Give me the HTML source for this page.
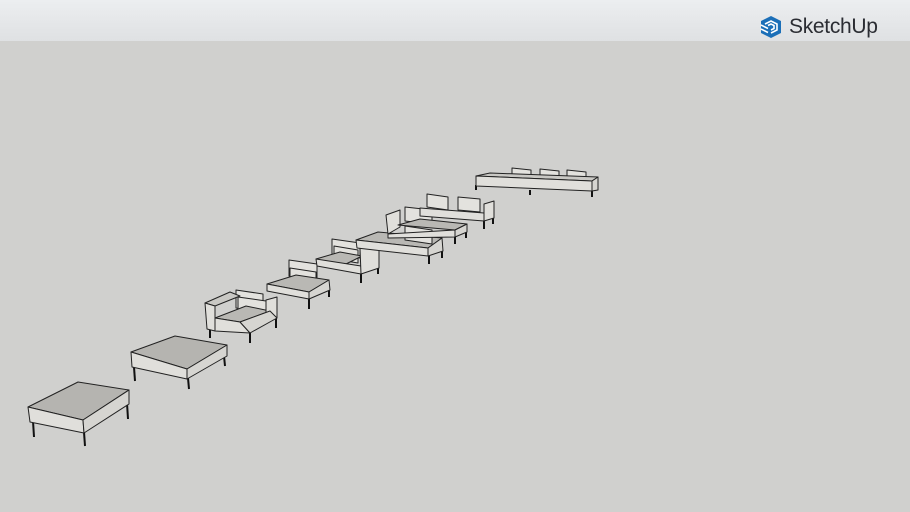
<!DOCTYPE html>
<html><head><meta charset="utf-8"><style>
html,body{margin:0;padding:0;width:910px;height:512px;overflow:hidden;background:#d0d0ce;font-family:"Liberation Sans",sans-serif}
.sky{position:absolute;left:0;top:0;width:910px;height:41px;background:linear-gradient(#eceef0,#dfe1e3)}
.logo{position:absolute;left:760px;top:15px;display:flex;align-items:center}
.logo span{font-size:21px;color:#2b2d33;margin-left:7px;letter-spacing:-0.3px}
svg.s{position:absolute;left:0;top:0}
</style></head><body>
<div class="sky"></div>
<div class="logo">
<svg width="22" height="24" viewBox="0 0 22 24"><path d="M11 1 L21 6 V18 L11 23 L1 18 V6 Z" fill="#1b6fb8"/><path d="M5 9 L11 6 L17 9 V15 L11 18 M8 10.5 L11 9 L14 10.5 V13.5 L11 15 M1 10 L8 13.5 M1 14 L8 17.5" stroke="#fff" stroke-width="1.6" fill="none"/></svg>
<span>SketchUp</span></div>
<svg class="s" width="910" height="512" viewBox="0 0 910 512" stroke="#222" stroke-width="1" stroke-linejoin="round">
<g stroke-width="2" stroke="#111">
<line x1="33" y1="421" x2="34" y2="437"/><line x1="84" y1="432" x2="85" y2="446"/><line x1="127" y1="403" x2="128" y2="419"/>
<line x1="134" y1="367" x2="135" y2="381"/><line x1="188" y1="378" x2="189" y2="389"/><line x1="224" y1="356" x2="225" y2="366"/>
<line x1="210" y1="328" x2="210" y2="338"/><line x1="250" y1="333" x2="250" y2="343"/><line x1="276" y1="318" x2="276" y2="328"/>
<line x1="309" y1="298" x2="309" y2="309"/><line x1="329" y1="290" x2="329" y2="297"/>
<line x1="361" y1="273" x2="361" y2="283"/><line x1="378" y1="268" x2="378" y2="274"/>
<line x1="429" y1="256" x2="429" y2="264"/><line x1="442" y1="251" x2="442" y2="258"/>
<line x1="455" y1="236" x2="455" y2="244"/><line x1="466" y1="232" x2="466" y2="238"/>
<line x1="484" y1="221" x2="484" y2="229"/><line x1="493" y1="218" x2="493" y2="224"/>
<line x1="530" y1="190" x2="530" y2="195"/><line x1="592" y1="191" x2="592" y2="197"/><line x1="476" y1="185" x2="476" y2="190"/>
</g>
<!-- ottoman 1 -->
<polygon points="28,407 78,382 129,390 83,420" fill="#b5b4b0"/>
<polygon points="28,407 83,420 84,433 30,422" fill="#e0dfdb"/>
<polygon points="83,420 129,390 129,404 84,433" fill="#d6d5d1"/>
<!-- ottoman 2 -->
<polygon points="131,352 175,336 227,345 187,369" fill="#b5b4b0"/>
<polygon points="131,352 187,369 187,379 132,367" fill="#e0dfdb"/>
<polygon points="187,369 227,345 227,356 187,379" fill="#d6d5d1"/>
<!-- chair 1 -->
<polygon points="236,290 263,294 263,312 236,308" fill="#e3e2de"/>
<polygon points="238,297 266,301 266,318 238,314" fill="#e3e2de"/>
<polygon points="205,303 230,292 240,296 215,306" fill="#c9c8c4"/>
<polygon points="205,303 215,306 215,331 207,329" fill="#e0dfdb"/>
<polygon points="215,318 246,306 270,311 240,322" fill="#b9b8b4"/>
<polygon points="215,318 240,322 250,333 215,331" fill="#e0dfdb"/>
<polygon points="266,300 277,297 277,318 266,322" fill="#e0dfdb"/>
<polygon points="240,322 270,311 277,318 250,333" fill="#d6d5d1"/>
<!-- chair 2 -->
<polygon points="289,260 317,264 317,280 289,276" fill="#e3e2de"/>
<polygon points="290,268 316,272 316,287 290,283" fill="#e3e2de"/>
<polygon points="267,284 296,275 329,280 309,292" fill="#b9b8b4"/>
<polygon points="267,284 309,292 309,299 267,291" fill="#e0dfdb"/>
<polygon points="309,292 329,280 330,290 309,299" fill="#d6d5d1"/>
<!-- chair 3 -->
<polygon points="332,239 360,243 360,258 332,254" fill="#e3e2de"/>
<polygon points="334,246 358,250 358,263 334,259" fill="#e3e2de"/>
<polygon points="316,259 340,252 362,256 342,266" fill="#b9b8b4"/>
<polygon points="316,259 361,266 361,274 317,266" fill="#e0dfdb"/>
<polygon points="360,248 379,244 379,268 361,274" fill="#e0dfdb"/>
<!-- sofa chaise -->
<polygon points="356,240 378,232 442,238 428,248" fill="#b9b8b4"/>
<polygon points="405,226 432,230 432,244 405,240" fill="#e3e2de"/>
<polygon points="356,240 428,248 428,256 357,248" fill="#e0dfdb"/>
<polygon points="428,248 442,238 443,251 428,256" fill="#d6d5d1"/>
<!-- sofa 2 -->
<polygon points="405,207 432,210 432,224 405,221" fill="#e3e2de"/>
<polygon points="386,215 400,210 400,227 388,234" fill="#e0dfdb"/>
<polygon points="398,225 420,219 467,224 455,230" fill="#b9b8b4"/>
<polygon points="388,234 455,230 455,237 388,238" fill="#e0dfdb"/>
<polygon points="455,230 467,224 467,232 455,237" fill="#d6d5d1"/>
<!-- sofa 3 -->
<polygon points="427,194 448,197 448,210 427,207" fill="#e3e2de"/>
<polygon points="458,197 480,199 480,212 458,210" fill="#e3e2de"/>
<polygon points="420,208 484,213 484,221 420,216" fill="#e0dfdb"/>
<polygon points="484,204 494,201 494,218 484,221" fill="#e0dfdb"/>
<!-- long sofa -->
<polygon points="512,168 531,170 531,180 512,178" fill="#e3e2de"/>
<polygon points="540,169 559,171 559,181 540,179" fill="#e3e2de"/>
<polygon points="567,170 586,172 586,182 567,180" fill="#e3e2de"/>
<polygon points="476,176 490,173 598,177 592,181" fill="#c9c8c4"/>
<polygon points="476,176 592,181 592,191 476,186" fill="#e0dfdb"/>
<polygon points="592,181 598,177 598,190 592,191" fill="#d6d5d1"/>
</svg>
</body></html>
